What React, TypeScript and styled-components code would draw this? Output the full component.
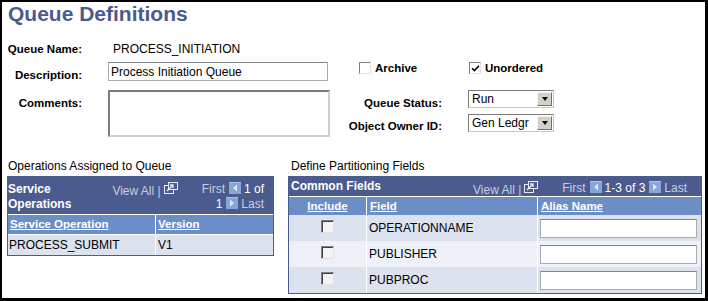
import React from "react";
import styled, { createGlobalStyle } from "styled-components";

const GlobalStyle = createGlobalStyle`
  html, body {
    margin: 0;
    padding: 0;
    background: #fff;
  }
  body {
    font-family: "Liberation Sans", Arial, sans-serif;
  }
`;

const Page = styled.div`
  box-sizing: border-box;
  width: 708px;
  height: 301px;
  border: solid #000;
  border-width: 2px 3px 3px 2px;
  padding-left: 5px;
  background: #fff;
  overflow: hidden;
  font-family: "Liberation Sans", Arial, sans-serif;
  font-size: 12px;
  color: #000;
`;

const Title = styled.h1`
  margin: 0 0 0 1px;
  font-size: 21px;
  line-height: 24px;
  font-weight: bold;
  color: #4b5a8e;
`;

const Form = styled.div`
  display: grid;
  grid-template-columns: 101px 232px 128px 100px;
  grid-template-rows: 20px 28px 24px 24px;
  margin-top: 14px;
`;

const Label = styled.div<{ $top: number }>`
  padding-top: ${(p) => p.$top}px;
  padding-right: 26px;
  text-align: right;
  font-size: 11.5px;
  font-weight: bold;
  line-height: 14px;
  white-space: nowrap;
`;

const Value = styled.div`
  padding: 2px 0 0 5px;
  line-height: 14px;
`;

const Spacer = styled.div``;

const TextInput = styled.input`
  box-sizing: border-box;
  margin: 2px 0 0;
  width: ${(p) => p.width || 220}px;
  height: 19px;
  padding: 0 2px;
  border: 1px solid #a5acb2;
  border-top-color: #7f8488;
  font-family: "Liberation Sans", Arial, sans-serif;
  font-size: 12px;
  color: #000;
  background: #fff;
  outline: none;
`;

const TextArea = styled.textarea`
  box-sizing: border-box;
  grid-row: span 2;
  margin: 2px 0 0;
  width: 222px;
  height: 47px;
  border: 2px solid;
  border-color: #7a7a7a #d4d0c8 #d4d0c8 #7a7a7a;
  resize: none;
  background: #fff;
  outline: none;
`;

const CheckCell = styled.label<{ $left: number }>`
  display: flex;
  align-items: center;
  gap: 4px;
  height: 14px;
  padding: 1px 0 0 ${(p) => p.$left}px;
  font-size: 11.5px;
  font-weight: bold;
  white-space: nowrap;
`;

const Box = styled.span<{ $size: number; $grid?: boolean }>`
  box-sizing: border-box;
  display: inline-flex;
  align-items: center;
  justify-content: center;
  width: ${(p) => p.$size}px;
  height: ${(p) => p.$size}px;
  border: 1px solid;
  border-color: #808080 #e4e2dc #e4e2dc #808080;
  background: ${(p) => (p.$grid ? "#f3f3f3" : "#fff")};
  box-shadow: ${(p) => (p.$grid ? "inset 1px 1px 0 #404040" : "none")};
`;

const SelectBox = styled.div`
  box-sizing: border-box;
  display: flex;
  align-items: center;
  justify-content: space-between;
  margin-top: 2px;
  width: 86px;
  height: 18px;
  padding: 0 1px 0 3px;
  border: 1px solid;
  border-color: #7a7a7a #c8c8c8 #c8c8c8 #7a7a7a;
  background: #fff;
  font-size: 12px;
  white-space: nowrap;
`;

const SelectButton = styled.span`
  box-sizing: border-box;
  display: flex;
  align-items: center;
  justify-content: center;
  width: 15px;
  height: 14px;
  background: #d4d0c8;
  border: 1px solid;
  border-color: #f4f3ef #707070 #707070 #f4f3ef;

  &::after {
    content: "";
    border-left: 3.5px solid transparent;
    border-right: 3.5px solid transparent;
    border-top: 4px solid #000;
  }
`;

const Lower = styled.div`
  display: flex;
  gap: 14px;
  margin-top: 23px;
`;

const Section = styled.section<{ $width: number }>`
  width: ${(p) => p.$width}px;
`;

const SectionLabel = styled.div<{ $left: number }>`
  padding-left: ${(p) => p.$left}px;
  margin-bottom: 3px;
  font-size: 12px;
  line-height: 14px;
`;

const GridFrame = styled.div`
  box-sizing: border-box;
  width: 100%;
  border: 1px solid #4b5b8e;
  background: #4b5b8e;
`;

const GridHead = styled.div<{ $height: number; $top: number; $right: number }>`
  display: flex;
  align-items: flex-start;
  box-sizing: border-box;
  height: ${(p) => p.$height}px;
  padding: ${(p) => p.$top}px ${(p) => p.$right}px 0 0;
  color: #fff;
  font-size: 12px;
  line-height: 15px;
`;

const HeadTitle = styled.div<{ $left: number }>`
  flex: 1;
  padding-left: ${(p) => p.$left}px;
  font-weight: bold;
`;

const Links = styled.div<{ $drop: number }>`
  margin-top: ${(p) => p.$drop}px;
  color: #c6cee2;
  white-space: nowrap;
`;

const Nav = styled.div<{ $drop: number }>`
  margin: ${(p) => p.$drop}px 0 0 24px;
  text-align: right;
  color: #c6cee2;
  white-space: nowrap;
`;

const Count = styled.span`
  color: #fff;
`;

const Table = styled.table`
  width: 100%;
  table-layout: fixed;
  border-collapse: separate;
  border-spacing: 0;
  background: #fff;
`;

const HeadCell = styled.th<{ $lh: number; $center?: boolean; $pad: number }>`
  padding: 0 0 0 ${(p) => p.$pad}px;
  border-top: 1px solid #fff;
  background: #6b8ec7;
  color: #fff;
  font-size: 11.5px;
  font-weight: bold;
  line-height: ${(p) => p.$lh}px;
  text-align: ${(p) => (p.$center ? "center" : "left")};
  text-decoration: underline;
  white-space: nowrap;

  & + & {
    border-left: 1px solid #fff;
  }
`;

const Row = styled.tr<{ $alt?: boolean }>`
  background: ${(p) => (p.$alt ? "#eef1f7" : "#dce3ef")};
`;

const Cell = styled.td<{ $height: number; $center?: boolean; $pad: number; $line?: boolean }>`
  height: ${(p) => p.$height}px;
  padding: 0 0 0 ${(p) => p.$pad}px;
  border-top: ${(p) => (p.$line ? "1px solid #fff" : "none")};
  font-size: 12px;
  line-height: 14px;
  text-align: ${(p) => (p.$center ? "center" : "left")};
  vertical-align: middle;
  white-space: nowrap;

  & + & {
    border-left: 1px solid #fff;
  }
`;

const ViewIcon = () => (
  <svg width="14" height="12" viewBox="0 0 14 12" style={{ verticalAlign: "1px", marginLeft: 3 }}>
    <rect x="0.5" y="3.5" width="9" height="8" fill="none" stroke="#e8ecf6" />
    <rect x="4.5" y="0.5" width="9" height="7" fill="#4b5b8e" stroke="#e8ecf6" />
    <path d="M3 9 L9 3 M6 3 H9 V6" fill="none" stroke="#e8ecf6" strokeWidth="1.3" />
  </svg>
);

const NavIcon = ({ dir }: { dir: "left" | "right" }) => (
  <svg width="12" height="12" viewBox="0 0 12 12" style={{ verticalAlign: "-1px", margin: "0 3px 0 4px" }}>
    <rect x="0" y="0" width="12" height="12" fill="#86a6d8" />
    <rect x="0" y="0" width="12" height="1" fill="#a9c1e6" />
    {dir === "left" ? (
      <path d="M4 6 L8 2.5 V9.5 Z" fill="#dde8f7" />
    ) : (
      <path d="M8 6 L4 2.5 V9.5 Z" fill="#dde8f7" />
    )}
  </svg>
);

const Check = () => (
  <svg width="9" height="9" viewBox="0 0 9 9">
    <path d="M1 4.2 L3.4 6.6 L8 1.8" fill="none" stroke="#000" strokeWidth="1.6" />
  </svg>
);

const Select = ({ value }: { value: string }) => (
  <SelectBox>
    <span>{value}</span>
    <SelectButton />
  </SelectBox>
);

const fields = ["OPERATIONNAME", "PUBLISHER", "PUBPROC"];

const App: React.FC = () => {
  return (
    <>
      <GlobalStyle />
      <Page>
        <Title>Queue Definitions</Title>
        <Form>
          <Label $top={2}>Queue Name:</Label>
          <Value>PROCESS_INITIATION</Value>
          <Spacer />
          <Spacer />

          <Label $top={8}>Description:</Label>
          <TextInput defaultValue="Process Initiation Queue" />
          <CheckCell $left={19}>
            <Box $size={12} />
            Archive
          </CheckCell>
          <CheckCell $left={1}>
            <Box $size={12}>
              <Check />
            </Box>
            Unordered
          </CheckCell>

          <Label $top={8}>Comments:</Label>
          <TextArea />
          <Label $top={8}>Queue Status:</Label>
          <Select value="Run" />

          <Spacer />
          <Label $top={7}>Object Owner ID:</Label>
          <Select value="Gen Ledgr" />
        </Form>

        <Lower>
          <Section $width={267}>
            <SectionLabel $left={1}>Operations Assigned to Queue</SectionLabel>
            <GridFrame>
              <GridHead $height={37} $top={5} $right={9}>
                <HeadTitle $left={0}>
                  Service
                  <br />
                  Operations
                </HeadTitle>
                <Links $drop={0}>
                  View All |<ViewIcon />
                </Links>
                <Nav $drop={0}>
                  First
                  <NavIcon dir="left" />
                  <Count>1 of</Count>
                  <br />
                  <Count>1</Count>
                  <NavIcon dir="right" />
                  Last
                </Nav>
              </GridHead>
              <Table>
                <colgroup>
                  <col style={{ width: 147 }} />
                  <col />
                </colgroup>
                <thead>
                  <tr>
                    <HeadCell $lh={19} $pad={2}>Service Operation</HeadCell>
                    <HeadCell $lh={19} $pad={2}>Version</HeadCell>
                  </tr>
                </thead>
                <tbody>
                  <Row>
                    <Cell $height={20} $pad={1} $line>PROCESS_SUBMIT</Cell>
                    <Cell $height={20} $pad={2} $line>V1</Cell>
                  </Row>
                </tbody>
              </Table>
            </GridFrame>
          </Section>

          <Section $width={414}>
            <SectionLabel $left={3}>Define Partitioning Fields</SectionLabel>
            <GridFrame>
              <GridHead $height={19} $top={2} $right={14}>
                <HeadTitle $left={2}>Common Fields</HeadTitle>
                <Links $drop={2}>
                  View All |<ViewIcon />
                </Links>
                <Nav $drop={2}>
                  First
                  <NavIcon dir="left" />
                  <Count>1-3 of 3</Count>
                  <NavIcon dir="right" />
                  Last
                </Nav>
              </GridHead>
              <Table>
                <colgroup>
                  <col style={{ width: 77 }} />
                  <col style={{ width: 171 }} />
                  <col />
                </colgroup>
                <thead>
                  <tr>
                    <HeadCell $lh={18} $pad={0} $center>Include</HeadCell>
                    <HeadCell $lh={18} $pad={3}>Field</HeadCell>
                    <HeadCell $lh={18} $pad={3}>Alias Name</HeadCell>
                  </tr>
                </thead>
                <tbody>
                  {fields.map((f, i) => (
                    <Row key={f} $alt={i % 2 === 1}>
                      <Cell $height={26} $pad={0} $center>
                        <Box $size={13} $grid />
                      </Cell>
                      <Cell $height={26} $pad={2}>{f}</Cell>
                      <Cell $height={26} $pad={2}>
                        <TextInput width={157} style={{ margin: 0, display: "block" }} />
                      </Cell>
                    </Row>
                  ))}
                </tbody>
              </Table>
            </GridFrame>
          </Section>
        </Lower>
      </Page>
    </>
  );
};

export default App;
